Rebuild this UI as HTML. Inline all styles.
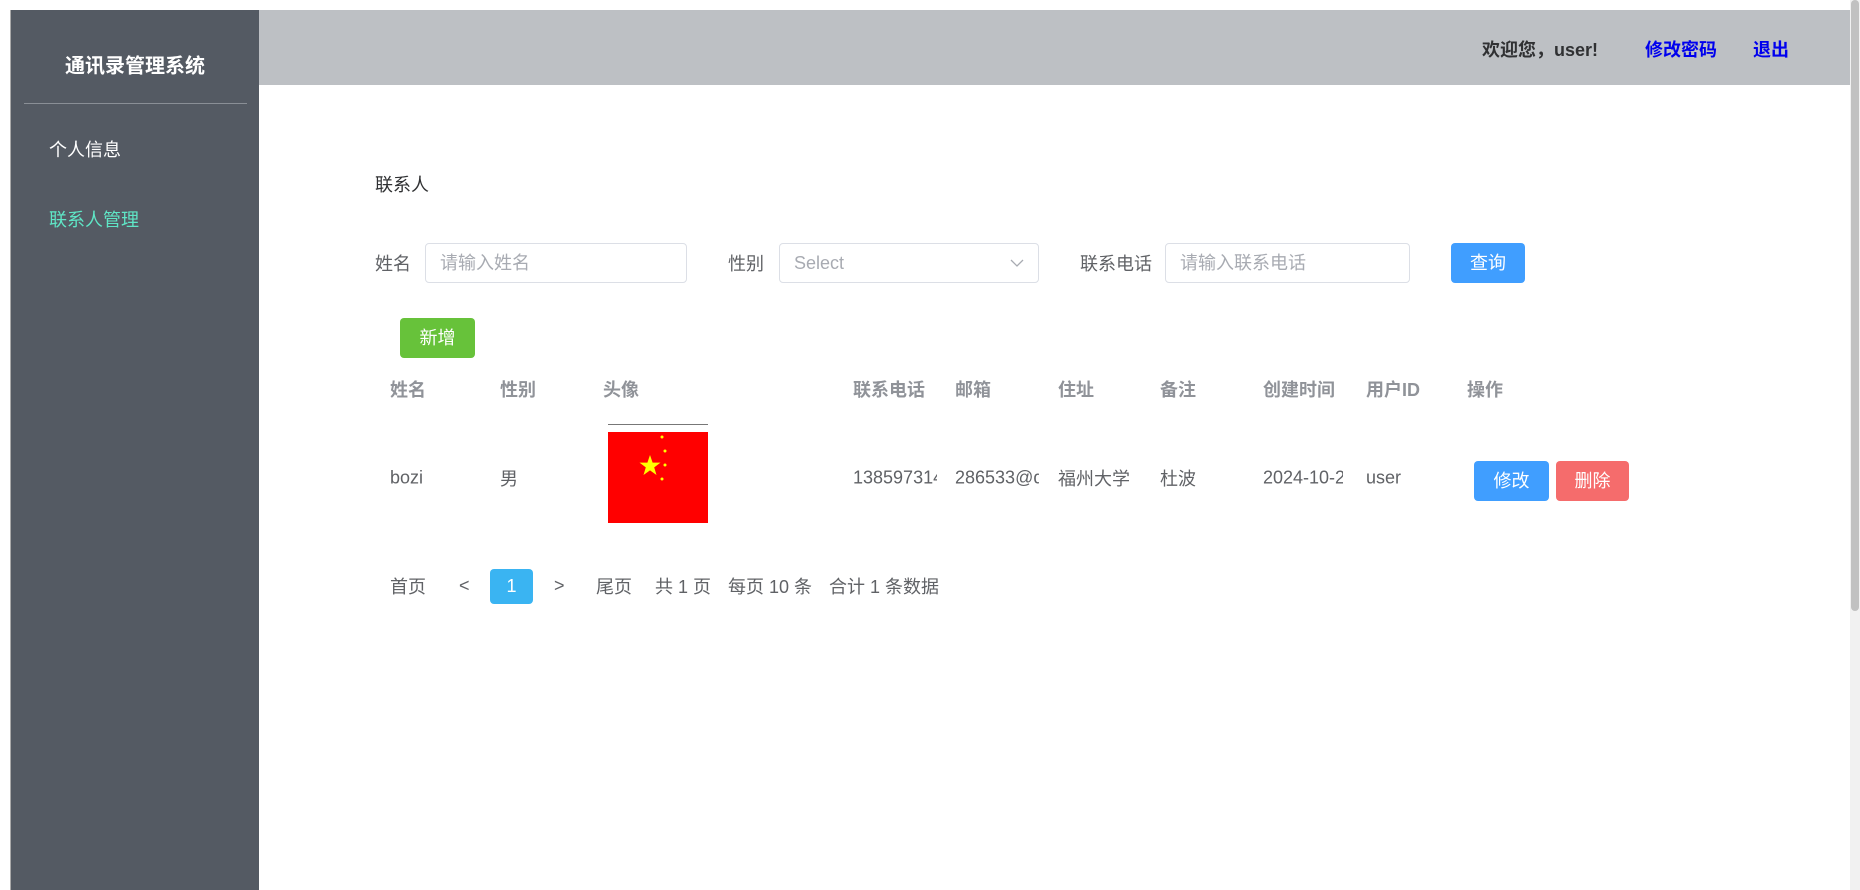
<!DOCTYPE html>
<html><head><meta charset="utf-8"><style>
*{margin:0;padding:0;box-sizing:border-box}
body{width:1860px;height:890px;position:relative;overflow:hidden;background:#fff;font-family:"Liberation Sans","Noto Sans CJK SC",sans-serif;color:#606266}
.a{position:absolute;white-space:nowrap}
.side{left:11px;top:10px;width:248px;height:880px;background:#545a63}
.head{left:259px;top:10px;width:1591px;height:75px;background:#bdc0c4}
.inp{border:1px solid #dcdfe6;border-radius:4px;height:40px;top:243px;background:#fff;color:#a8abb2;font-size:18px;line-height:38px;padding-left:14px}
.lbl{font-size:18px;top:263px;transform:translateY(-50%);color:#606266}
.btn{color:#fff;font-size:18px;text-align:center;line-height:40px;height:40px;border-radius:4px}
.th{top:389px;transform:translateY(-50%);font-weight:bold;color:#909399;font-size:18px}
.td{top:478px;transform:translateY(-50%);font-size:18px;color:#606266;overflow:hidden;width:98px}
.pg{top:586px;transform:translateY(-50%);font-size:18px;color:#606266}
</style></head><body>
<div class="a" style="left:0;top:0;width:1860px;height:10px;background:#fff"></div>
<div class="a side"></div>
<div class="a" style="left:10px;top:10px;width:1px;height:880px;background:#aaa"></div>
<div class="a head"></div>
<div class="a" style="left:1850px;top:0;width:10px;height:890px;background:#f1f1f1"></div>
<div class="a" style="left:1851px;top:0;width:8px;height:611px;background:#c1c1c1;border-radius:4px"></div>
<div class="a" style="left:135px;top:64px;transform:translate(-50%,-50%);color:#fff;font-weight:bold;font-size:20px">通讯录管理系统</div>
<div class="a" style="left:24px;top:103px;width:223px;height:1px;background:#8a8f96"></div>
<div class="a" style="left:49px;top:149px;transform:translateY(-50%);color:#fff;font-size:18px">个人信息</div>
<div class="a" style="left:49px;top:219px;transform:translateY(-50%);color:#5fe6c6;font-size:18px">联系人管理</div>
<div class="a" style="left:1482px;top:49px;transform:translateY(-50%);color:#303133;font-weight:bold;font-size:18px">欢迎您，user!</div>
<div class="a" style="left:1645px;top:49px;transform:translateY(-50%);color:#0000ee;font-weight:bold;font-size:18px">修改密码</div>
<div class="a" style="left:1753px;top:49px;transform:translateY(-50%);color:#0000ee;font-weight:bold;font-size:18px">退出</div>
<div class="a" style="left:375px;top:184px;transform:translateY(-50%);color:#303133;font-size:18px">联系人</div>
<div class="a lbl" style="left:375px">姓名</div>
<div class="a inp" style="left:425px;width:262px">请输入姓名</div>
<div class="a lbl" style="left:728px">性别</div>
<div class="a inp" style="left:779px;width:260px">Select</div>
<svg class="a" style="left:1010px;top:258px" width="14" height="10" viewBox="0 0 14 10"><path d="M1 2 L7 8 L13 2" fill="none" stroke="#a8abb2" stroke-width="1.3"/></svg>
<div class="a lbl" style="left:1080px">联系电话</div>
<div class="a inp" style="left:1165px;width:245px">请输入联系电话</div>
<div class="a btn" style="left:1451px;top:243px;width:74px;background:#409eff">查询</div>
<div class="a btn" style="left:400px;top:318px;width:75px;background:#67c23a">新增</div>
<div class="a th" style="left:390px">姓名</div>
<div class="a th" style="left:500px">性别</div>
<div class="a th" style="left:603px">头像</div>
<div class="a th" style="left:853px">联系电话</div>
<div class="a th" style="left:955px">邮箱</div>
<div class="a th" style="left:1058px">住址</div>
<div class="a th" style="left:1160px">备注</div>
<div class="a th" style="left:1263px">创建时间</div>
<div class="a th" style="left:1366px">用户ID</div>
<div class="a th" style="left:1467px">操作</div>
<div class="a td" style="left:390px">bozi</div>
<div class="a td" style="left:500px">男</div>
<svg class="a" style="left:608px;top:424px" width="100" height="99" viewBox="0 0 100 99">
<rect width="100" height="99" fill="#ff0000"/>
<rect width="100" height="8" fill="#fff"/>
<rect width="100" height="1" fill="#777"/>
<polygon points="42,31 44.6,38.6 52.5,38.6 46.2,43.4 48.5,51 42,46.4 35.5,51 37.8,43.4 31.5,38.6 39.4,38.6" fill="#ffff00"/>
<circle cx="54" cy="13" r="1.5" fill="#ff0"/><circle cx="57" cy="27" r="1.5" fill="#ff0"/><circle cx="57" cy="41" r="1.5" fill="#ff0"/><circle cx="54" cy="55" r="1.5" fill="#ff0"/>
</svg>
<div class="a td" style="left:853px;width:84px">13859731486</div>
<div class="a td" style="left:955px;width:84px">286533@qq.com</div>
<div class="a td" style="left:1058px">福州大学</div>
<div class="a td" style="left:1160px">杜波</div>
<div class="a td" style="left:1263px;width:80px">2024-10-22</div>
<div class="a td" style="left:1366px">user</div>
<div class="a btn" style="left:1474px;top:461px;width:75px;background:#409eff">修改</div>
<div class="a btn" style="left:1556px;top:461px;width:73px;background:#f56c6c">删除</div>
<div class="a pg" style="left:390px">首页</div>
<div class="a pg" style="left:459px">&lt;</div>
<div class="a btn" style="left:490px;top:569px;width:43px;height:35px;line-height:35px;background:#3ab4f2">1</div>
<div class="a pg" style="left:554px">&gt;</div>
<div class="a pg" style="left:596px">尾页</div>
<div class="a pg" style="left:655px">共 1 页</div>
<div class="a pg" style="left:728px">每页 10 条</div>
<div class="a pg" style="left:829px">合计 1 条数据</div>
</body></html>
